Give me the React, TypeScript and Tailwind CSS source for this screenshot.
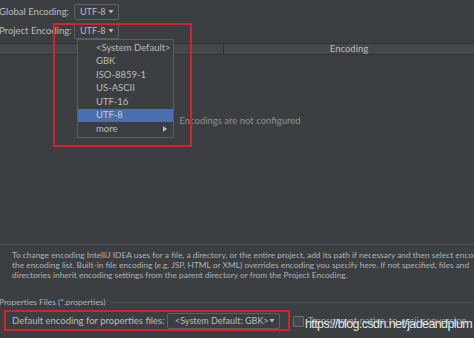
import React from "react";

const Caret = () => (
  <svg width="6" height="4" viewBox="0 0 6 4" className="shrink-0">
    <path d="M0.5 0 L5.5 0 L3 3.5 Z" fill="#bbbbbb" />
  </svg>
);

const Combo = ({ label, w, text = "" }: { label: string; w: string; text?: string }) => (
  <div className={`flex items-center justify-between shrink-0 h-[16px] border border-[#5e6163] rounded-[2px] pl-[5px] pr-[4px] bg-[#3c3f41] ${w}`}>
    <span className={`text-[#bbbbbb] ${text}`}>{label}</span>
    <Caret />
  </div>
);

export default function App() {
  const items = ["<System Default>", "GBK", "ISO-8859-1", "US-ASCII", "UTF-16", "UTF-8"];
  return (
    <div
      className="relative w-[474px] h-[338px] overflow-hidden whitespace-nowrap bg-[#3c3f41] text-[#bbbbbb] text-[9.5px] leading-[12px]"
      style={{ fontFamily: "Lato, 'Liberation Sans', sans-serif" }}
    >
      <div className="flex flex-col h-full">
        <div className="flex items-center h-[22px] pt-[1px]">
          <span className="w-[75px] shrink-0 -ml-[1px]">Global Encoding:</span>
          <Combo label="UTF-8" w="w-[45px]" text="text-[9px]" />
        </div>
        <div className="flex items-center h-[18px]">
          <span className="w-[75px] shrink-0 -ml-[1px]">Project Encoding:</span>
          <Combo label="UTF-8" w="w-[45px]" text="text-[9px]" />
        </div>
        <div className="h-[3px]" />
        <div className="flex h-[12px] bg-[#45484a] border-y border-[#323232]">
          <div className="w-[224px] border-r border-[#2f3133]" />
          <div className="flex-1 flex items-center justify-center text-[#bbbbbb] leading-[10px]">Encoding</div>
        </div>
        <div className="h-[189px] flex justify-center pt-[60px]">
          <span className="text-[#8e9092] pl-[6px]">Encodings are not configured</span>
        </div>
        <div className="h-[1px] bg-[#515456]" />
        <div className="px-[12px] pt-[5px] text-[8.4px] leading-[10px] text-[#b0b2b4]">
          <div>To change encoding IntelliJ IDEA uses for a file, a directory, or the entire project, add its path if necessary and then select encoding</div>
          <div>the encoding list. Built-in file encoding (e.g. JSP, HTML or XML) overrides encoding you specify here. If not specified, files and</div>
          <div>directories inherit encoding settings from the parent directory or from the Project Encoding.</div>
        </div>
        <div className="flex items-center h-[14px] mt-[15px] -ml-[1px]">
          <span className="text-[8.4px] text-[#b0b2b4]">Properties Files (*.properties)</span>
          <div className="flex-1 h-[1px] bg-[#515456] ml-[4px]" />
        </div>
        <div className="flex items-center h-[16px] mt-[4px] pl-[12px]">
          <span className="w-[155px] shrink-0">Default encoding for properties files:</span>
          <Combo label="<System Default: GBK>" w="w-[113px] !pl-[7px]" text="text-[9px]" />
          <div className="ml-[13px] shrink-0 w-[11px] h-[11px] border border-[#6b6e70] rounded-[1px] bg-[#43494a]" />
          <span className="ml-[4px] text-[#9a9c9e]">Transparent native-to-ascii conversion</span>
        </div>
      </div>

      {/* dropdown popup */}
      <div className="absolute left-[77px] top-[39px] w-[97px] bg-[#3c3f41] border border-[#5b5e60] py-[1px]">
        {items.map((it) => (
          <div
            key={it}
            className={`h-[13.5px] flex items-center pl-[18px] ${it === "UTF-8" ? "bg-[#4b6eaf] text-[#c5cbd5]" : ""}`}
          >
            {it}
          </div>
        ))}
        <div className="h-[13.5px] flex items-center pl-[18px] pr-[6px] justify-between">
          <span>more</span>
          <svg width="4" height="6" viewBox="0 0 4 6"><path d="M0 0 L4 3 L0 6 Z" fill="#bbbbbb" /></svg>
        </div>
      </div>

      {/* red annotations */}
      <div className="absolute left-[53px] top-[23px] w-[139px] h-[124px] border-2 border-[#d0262b]" />
      <div className="absolute left-[4px] top-[310px] w-[286px] h-[21px] border-2 border-[#d0262b]" />

      {/* watermark */}
      <div
        className="absolute left-[305px] top-[317px] text-[12.5px] leading-[14px] text-[#e8e8e8] tracking-[-0.6px]"
        style={{ fontFamily: "'Liberation Sans', sans-serif" }}
      >
        https://blog.csdn.net/jadeandplum
      </div>
    </div>
  );
}
